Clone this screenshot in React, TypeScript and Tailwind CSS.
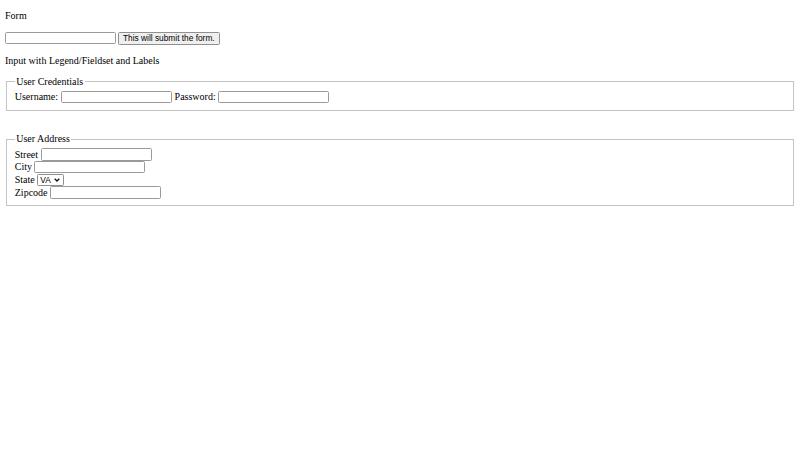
import React from 'react'

const inputCls =
  'h-[12.5px] w-[111px] rounded-[1.5px] border border-[#9a9a9a] bg-white px-[1px] text-[8.33px] outline-none'

function TextField({ label }: { label: string }) {
  return (
    <label className="flex h-[12.67px] items-center gap-[2.5px]">
      <span>{label}</span>
      <input type="text" className={inputCls} />
    </label>
  )
}

export default function App() {
  return (
    <div className="min-h-[450px] bg-white px-[5px] pt-[10px] font-['Liberation_Serif','Times_New_Roman',serif] text-[10px] leading-[11.5px] text-black">
      <p>Form</p>

      <form className="mt-[10px] flex h-[13px] items-center gap-[2px]" onSubmit={e => e.preventDefault()}>
        <input type="text" className={inputCls} />
        <button
          type="submit"
          className="h-[13px] rounded-[1.5px] border border-[#8f8f8f] bg-[#efefef] px-[4px] font-['Liberation_Sans',Arial,sans-serif] text-[8.33px] leading-[11px] text-black"
        >
          This will submit the form.
        </button>
      </form>

      <p className="mt-[10px]">Input with Legend/Fieldset and Labels</p>

      <fieldset className="mx-[1.25px] mt-[10px] border border-[#c4c4c4] px-[7.5px] pt-[2.5px] pb-[6.25px]">
        <legend className="px-[1.5px]">User Credentials</legend>
        <div className="flex h-[14px] items-center gap-[3px]">
          <label className="flex items-center gap-[2.5px]">
            <span>Username:</span>
            <input type="text" className={inputCls} />
          </label>
          <label className="flex items-center gap-[2.5px]">
            <span>Password:</span>
            <input type="password" className={inputCls} />
          </label>
        </div>
      </fieldset>

      <fieldset className="mx-[1.25px] mt-[22px] border border-[#c4c4c4] px-[7.5px] pt-[3.5px] pb-[6.25px]">
        <legend className="px-[1.5px]">User Address</legend>
        <TextField label="Street" />
        <TextField label="City" />
        <label className="flex h-[12.67px] items-center gap-[2.5px]">
          <span>State</span>
          <span className="relative inline-flex h-[12px] w-[27px] items-center rounded-[1.5px] border border-[#8f8f8f] bg-white pl-[2px] font-['Liberation_Sans',Arial,sans-serif] text-[8.33px]">
            <select className="w-full appearance-none bg-transparent leading-[10px] outline-none" defaultValue="VA">
              <option value="VA">VA</option>
              <option value="MD">MD</option>
              <option value="DC">DC</option>
            </select>
            <svg
              className="pointer-events-none absolute right-[3px] top-[3.5px]"
              width="6"
              height="4"
              viewBox="0 0 6 4"
              fill="none"
            >
              <path d="M0.7 0.7 L3 3 L5.3 0.7" stroke="#111" strokeWidth="1.3" />
            </svg>
          </span>
        </label>
        <TextField label="Zipcode" />
      </fieldset>
    </div>
  )
}
